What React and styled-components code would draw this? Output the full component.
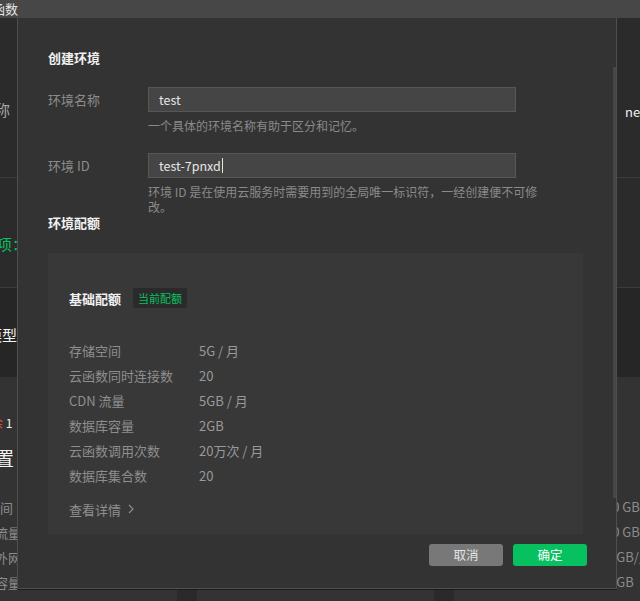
import React from 'react'
import styled, { createGlobalStyle } from 'styled-components'

const GlobalStyle = createGlobalStyle`
  html, body {
    margin: 0;
    padding: 0;
    background: #333;
  }
  body {
    font-family: "Noto Sans CJK SC", "Noto Sans", sans-serif;
  }
`

const quotas = [
    { label: '存储空间', value: '5G / 月' },
    { label: '云函数同时连接数', value: '20' },
    { label: 'CDN 流量', value: '5GB / 月' },
    { label: '数据库容量', value: '2GB' },
    { label: '云函数调用次数', value: '20万次 / 月' },
    { label: '数据库集合数', value: '20' },
]

const leftStats = ['空间', '流量', '外网', '容量']
const rightStats = [
    { text: '10 GB', shift: -12 },
    { text: '10 GB/月', shift: -12 },
    { text: '5GB/月', shift: -8 },
    { text: '2GB', shift: -8 },
]

export default function App() {
    return (
        <Page>
            <GlobalStyle />

            {/* page behind the dialog */}
            <TopBar><span>函数</span></TopBar>
            <Section $height={160} $line>
                <Side $top={82}>
                    <BgText $size={15} $color="#a8a8a8" $shift={-20}>名称</BgText>
                </Side>
                <RightSide $top={84}>
                    <BgText $size={13} $color="#f2f2f2" $shift={8}>new</BgText>
                </RightSide>
            </Section>
            <Section $height={110} $line>
                <Side $top={56}>
                    <BgText $size={15} $color="#07c160" $shift={-3}>项：</BgText>
                </Side>
                <RightSide />
            </Section>
            <Section $height={89} $bg="#262626">
                <Side $top={37}>
                    <BgText $size={15} $color="#f2f2f2" $shift={-13}>模型</BgText>
                </Side>
                <RightSide />
            </Section>
            <BottomSection>
                <Side $top={36}>
                    <BgText $size={12} $color="#f2f2f2" $shift={-9}>
                        <Red>余</Red> 1
                    </BgText>
                    <BgText $size={19} $line={26} $color="#f2f2f2" $shift={-24} $mt={12}>配置</BgText>
                    <StatList>
                        {leftStats.map((s, i) => (
                            <BgText key={i} $size={13} $line={25} $color="#8c8c8c" $shift={i === 0 ? -13 : -5}>{s}</BgText>
                        ))}
                    </StatList>
                </Side>
                <DarkColumn $left={177} />
                <DarkColumn $left={434} />
                <RightSide $top={117}>
                    {rightStats.map((s, i) => (
                        <BgText key={i} $size={13} $line={25} $color="#8c8c8c" $shift={s.shift}>{s.text}</BgText>
                    ))}
                </RightSide>
            </BottomSection>

            {/* dialog */}
            <Modal>
                <ScrollThumb />
                <Body>
                    <Heading>创建环境</Heading>

                    <FieldRow $mt={20}>
                        <FieldLabel>环境名称</FieldLabel>
                        <InputBox>test</InputBox>
                    </FieldRow>
                    <Hint>一个具体的环境名称有助于区分和记忆。</Hint>

                    <FieldRow $mt={20}>
                        <FieldLabel>环境 ID</FieldLabel>
                        <InputBox>test-7pnxd<Caret /></InputBox>
                    </FieldRow>
                    <Hint>环境 ID 是在使用云服务时需要用到的全局唯一标识符，一经创建便不可修改。</Hint>

                    <Heading>环境配额</Heading>

                    <QuotaCard>
                        <CardHeader>
                            <CardTitle>基础配额</CardTitle>
                            <Badge>当前配额</Badge>
                        </CardHeader>
                        <QuotaList>
                            {quotas.map((q, i) => (
                                <QuotaRow key={i}>
                                    <QuotaLabel>{q.label}</QuotaLabel>
                                    <QuotaValue>{q.value}</QuotaValue>
                                </QuotaRow>
                            ))}
                        </QuotaList>
                        <DetailLink>
                            查看详情
                            <svg width="6" height="10" viewBox="0 0 6 10">
                                <polyline points="1,1 5,5 1,9" fill="none" stroke="#8e8e8e" strokeWidth="1.1" />
                            </svg>
                        </DetailLink>
                    </QuotaCard>
                </Body>
                <Footer>
                    <Button>取消</Button>
                    <Button $primary>确定</Button>
                </Footer>
            </Modal>
        </Page>
    )
}

const Page = styled.div`
    position: relative;
    width: 640px;
    height: 601px;
    overflow: hidden;
    display: flex;
    flex-direction: column;
    background: #333;
`

const TopBar = styled.div`
    height: 18px;
    flex-shrink: 0;
    background: #474747;
    color: #e6e6e6;
    font-size: 13px;
    line-height: 18px;
    white-space: nowrap;

    span {
        margin-left: -8px;
    }
`

const Section = styled.div`
    height: ${p => p.$height}px;
    flex-shrink: 0;
    box-sizing: border-box;
    background: ${p => p.$bg || '#2b2b2b'};
    border-bottom: ${p => (p.$line ? '1px solid #3b3b3b' : 'none')};
    display: flex;
    justify-content: space-between;
`

const BottomSection = styled.div`
    position: relative;
    flex: 1;
    background: #333;
    display: flex;
    justify-content: space-between;
`

const Side = styled.div`
    width: 17px;
    padding-top: ${p => p.$top || 0}px;
    display: flex;
    flex-direction: column;
    white-space: nowrap;
`

const RightSide = styled(Side)`
    width: 23px;
`

const BgText = styled.div`
    font-size: ${p => p.$size}px;
    line-height: ${p => p.$line || 20}px;
    color: ${p => p.$color};
    margin-left: ${p => p.$shift || 0}px;
    margin-top: ${p => p.$mt || 0}px;
    white-space: nowrap;
`

const Red = styled.span`
    color: #e5533d;
`

const StatList = styled.div`
    margin-top: 24px;
    display: flex;
    flex-direction: column;
`

const DarkColumn = styled.div`
    position: absolute;
    top: 0;
    bottom: 0;
    left: ${p => p.$left}px;
    width: 20px;
    background: #2a2a2a;
`

const Modal = styled.div`
    position: absolute;
    z-index: 2;
    top: 18px;
    left: 17px;
    width: 600px;
    height: 571px;
    box-sizing: border-box;
    background: #333;
    border: 1px solid #4f4f4f;
    border-top: none;
    box-shadow: 0 1px 0 #1c1c1c;
    display: flex;
    flex-direction: column;
`

const ScrollThumb = styled.div`
    position: absolute;
    top: 49px;
    right: 0;
    width: 3px;
    height: 431px;
    background: #474747;
`

const Body = styled.div`
    padding: 31px 33px 0 30px;
    display: flex;
    flex-direction: column;
`

const Heading = styled.div`
    font-size: 13px;
    font-weight: 700;
    line-height: 18px;
    color: #f0f0f0;
`

const FieldRow = styled.div`
    display: flex;
    align-items: center;
    margin-top: ${p => p.$mt}px;
`

const FieldLabel = styled.div`
    width: 100px;
    font-size: 13px;
    color: #8c8c8c;
`

const InputBox = styled.div`
    width: 368px;
    height: 25px;
    box-sizing: border-box;
    padding: 0 10px;
    background: #454545;
    border: 1px solid #575757;
    color: #e6e6e6;
    font-size: 12.5px;
    display: flex;
    align-items: center;
`

const Caret = styled.span`
    width: 1px;
    height: 15px;
    margin-left: 1px;
    background: #e6e6e6;
`

const Hint = styled.div`
    margin: 6px 0 0 100px;
    max-width: 395px;
    font-size: 12px;
    line-height: 15px;
    color: #8a8a8a;
`

const QuotaCard = styled.div`
    margin-top: 21px;
    padding: 35px 21px 15px;
    background: #383838;
`

const CardHeader = styled.div`
    display: flex;
    align-items: center;
    gap: 12px;
    height: 20px;
`

const CardTitle = styled.div`
    font-size: 13px;
    font-weight: 700;
    color: #f0f0f0;
`

const Badge = styled.div`
    height: 20px;
    padding: 0 5px;
    border-radius: 2px;
    background: #2a2a2a;
    color: #07c160;
    font-size: 11px;
    line-height: 20px;
`

const QuotaList = styled.div`
    margin-top: 30px;
`

const QuotaRow = styled.div`
    display: flex;
    font-size: 13px;
    line-height: 25px;
`

const QuotaLabel = styled.div`
    width: 130px;
    color: #8e8e8e;
`

const QuotaValue = styled.div`
    color: #9a9a9a;
`

const DetailLink = styled.div`
    margin-top: 11px;
    height: 20px;
    display: flex;
    align-items: center;
    gap: 7px;
    font-size: 13px;
    color: #8e8e8e;
`

const Footer = styled.div`
    display: flex;
    justify-content: flex-end;
    gap: 10px;
    padding: 10px 29px 0 0;
`

const Button = styled.button`
    width: 74px;
    height: 22px;
    padding: 0;
    border: none;
    border-radius: 3px;
    background: ${p => (p.$primary ? '#07c160' : '#787878')};
    color: ${p => (p.$primary ? '#fff' : '#e4e4e4')};
    font-family: inherit;
    font-size: 12.5px;
    line-height: 22px;
`
